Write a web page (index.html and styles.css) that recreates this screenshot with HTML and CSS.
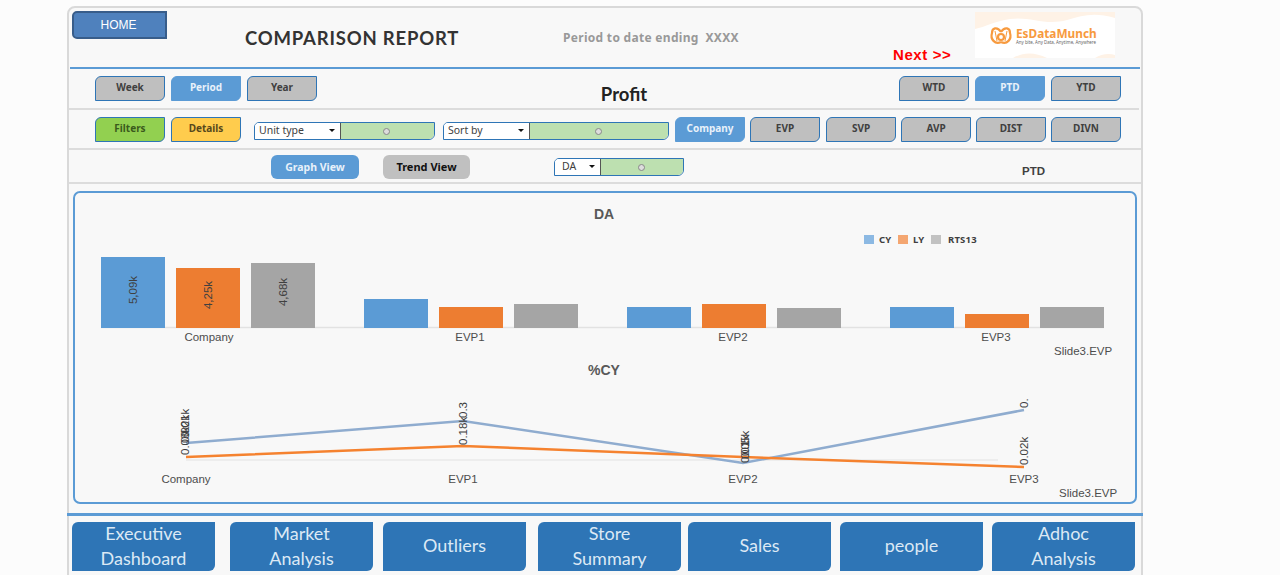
FILE: index.html
```html
<!DOCTYPE html>
<html lang="en">
<head>
<meta charset="utf-8">
<title>Comparison Report</title>
<link rel="stylesheet" href="styles.css">
</head>
<body>
<main class="panel">
  <header class="head">
    <a class="home">HOME</a>
    <h1 class="title">COMPARISON REPORT</h1>
    <p class="period">Period to date ending&nbsp; XXXX</p>
    <a class="next">Next &gt;&gt;</a>
    <svg class="logo" viewBox="0 0 140 46" role="img" aria-label="EsDataMunch logo">
      <rect width="140" height="46" fill="#fff"/>
      <path d="M0 0H140V6C120 0 108 3 92 8C70 14 55 4 35 7C20 9 10 15 0 17Z" fill="#fef2e6"/>
      <path d="M38 46C48 40 60 40 72 46Z" fill="#fef2e6"/>
      <path d="M120 46C126 42 134 41 140 43V46Z" fill="#fef2e6"/>
      <g fill="none" stroke="#f79a3e" stroke-width="2.200">
        <path d="M26 20C22 14 17 16 17 21C15 27 20 33 26 30"/>
        <path d="M26 20C30 14 35 16 35 21C37 27 32 33 26 30"/>
        <path d="M20 19L22 29M32 19L30 29" stroke-width="1"/>
        <circle cx="26" cy="25" r="3"/>
      </g>
      <text x="41" y="26" class="logo-name">EsDataMunch</text>
      <text x="41" y="31.500" class="logo-tag">Any bite, Any Data, Anytime, Anywhere</text>
    </svg>
  </header>

  <section class="row row-a">
    <div class="group">
      <button class="btn">Week</button>
      <button class="btn on">Period</button>
      <button class="btn wide-gap">Year</button>
    </div>
    <h2 class="metric">Profit</h2>
    <div class="group">
      <button class="btn">WTD</button>
      <button class="btn on">PTD</button>
      <button class="btn">YTD</button>
    </div>
  </section>

  <section class="row row-b">
    <button class="btn green">Filters</button>
    <button class="btn amber">Details</button>
    <div class="slicer s1"><span class="pick">Unit type<i class="caret"></i></span><span class="track"><i class="knob"></i></span></div>
    <div class="slicer s2"><span class="pick">Sort by<i class="caret"></i></span><span class="track"><i class="knob"></i></span></div>
    <button class="btn on">Company</button>
    <button class="btn tight">EVP</button>
    <button class="btn">SVP</button>
    <button class="btn tight">AVP</button>
    <button class="btn tight">DIST</button>
    <button class="btn tight">DIVN</button>
  </section>

  <section class="row row-c">
    <button class="view view-on">Graph View</button>
    <button class="view view-off">Trend View</button>
    <div class="slicer s3"><span class="pick">DA<i class="caret"></i></span><span class="track"><i class="knob"></i></span></div>
    <span class="ptd">PTD</span>
  </section>

  <section class="charts">
    <svg class="plot" viewBox="75 193 1060 309" role="img" aria-label="DA and percent CY charts">
      <text x="604" y="219" class="chart-title">DA</text>
      <rect x="864" y="235" width="10" height="9" class="lg-cy"/>
      <text x="879" y="243" class="legend">CY</text>
      <rect x="898" y="235" width="10" height="9" class="lg-ly"/>
      <text x="913" y="243" class="legend">LY</text>
      <rect x="931" y="235" width="10" height="9" class="lg-rt"/>
      <text x="948" y="243" class="legend">RTS13</text>

      <line x1="101" y1="327.500" x2="1104" y2="327.500" class="axis"/>
      <rect x="101" y="257" width="64" height="71" class="cy"/>
      <rect x="176" y="268" width="64" height="60" class="ly"/>
      <rect x="251" y="263" width="64" height="65" class="rt"/>
      <rect x="364" y="299" width="64" height="29" class="cy"/>
      <rect x="439" y="307" width="64" height="21" class="ly"/>
      <rect x="514" y="304" width="64" height="24" class="rt"/>
      <rect x="627" y="307" width="64" height="21" class="cy"/>
      <rect x="702" y="304" width="64" height="24" class="ly"/>
      <rect x="777" y="308" width="64" height="20" class="rt"/>
      <rect x="890" y="307" width="64" height="21" class="cy"/>
      <rect x="965" y="314" width="64" height="14" class="ly"/>
      <rect x="1040" y="307" width="64" height="21" class="rt"/>

      <text transform="translate(137 290) rotate(-90)" class="val mid">5,09k</text>
      <text transform="translate(212 295) rotate(-90)" class="val mid">4,25k</text>
      <text transform="translate(287 292) rotate(-90)" class="val mid">4,68k</text>

      <text x="209" y="341" class="cat">Company</text>
      <text x="470" y="341" class="cat">EVP1</text>
      <text x="733" y="341" class="cat">EVP2</text>
      <text x="996" y="341" class="cat">EVP3</text>
      <text x="1054" y="355" class="note">Slide3.EVP</text>

      <text x="604" y="375" class="chart-title">%CY</text>
      <line x1="186" y1="460" x2="998" y2="460" class="axis thin"/>
      <polyline points="186,443 463,421 743,463 1024,410" class="line-cy"/>
      <polyline points="186,457 463,446 743,457 1024,467" class="line-ly"/>

      <text transform="translate(189 455) rotate(-90)" class="val">0.03k</text>
      <text transform="translate(189 443) rotate(-90)" class="val">0.02k</text>
      <text transform="translate(189 437) rotate(-90)" class="val">0.01k</text>
      <text transform="translate(467 445) rotate(-90)" class="val">0.18k</text>
      <text transform="translate(467 418) rotate(-90)" class="val">0.3</text>
      <text transform="translate(749 463) rotate(-90)" class="val">0.01k</text>
      <text transform="translate(749 459) rotate(-90)" class="val">0.05k</text>
      <text transform="translate(749 456) rotate(-90)" class="val">0.1</text>
      <text transform="translate(1028 408) rotate(-90)" class="val">0.</text>
      <text transform="translate(1028 465) rotate(-90)" class="val">0.02k</text>

      <text x="186" y="483" class="cat">Company</text>
      <text x="463" y="483" class="cat">EVP1</text>
      <text x="743" y="483" class="cat">EVP2</text>
      <text x="1024" y="483" class="cat">EVP3</text>
      <text x="1059" y="497" class="note">Slide3.EVP</text>
    </svg>
  </section>

  <nav class="nav">
    <a class="tile">Executive Dashboard</a>
    <a class="tile">Market Analysis</a>
    <a class="tile">Outliers</a>
    <a class="tile">Store Summary</a>
    <a class="tile">Sales</a>
    <a class="tile">people</a>
    <a class="tile">Adhoc Analysis</a>
  </nav>
</main>
</body>
</html>
```
FILE: styles.css
```css
* { box-sizing: border-box; }
html, body { margin: 0; height: 575px; overflow: hidden; }
body { background: #fcfcfc; padding: 6px 0 0 67px; font-family: "Noto Sans", sans-serif; }
a { display: block; }
h1, h2, p { margin: 0; font-weight: inherit; }

.panel {
  width: 1076px;
  height: 580px;
  background: #f8f8f8;
  border: 2px solid #d9d9d9;
  border-radius: 8px;
}

/* header */
.head {
  position: relative;
  display: flex;
  align-items: flex-start;
  height: 61px;
  margin: 0 1px 0 1px;
  border-bottom: 2px solid #5b9bd5;
}
.home {
  width: 95px;
  height: 28px;
  margin: 3px 0 0 2px;
  background: #4f81bd;
  border: 2px solid #385d8a;
  border-radius: 5px 0 0 5px;
  color: #fff;
  font: 12px/25px "Liberation Sans", sans-serif;
  text-indent: -2px;
  text-align: center;
}
.title {
  margin: 18px 0 0 78px;
  width: 318px;
  color: #333;
  font: 700 18.500px/24px "Lato", sans-serif;
  letter-spacing: 0.8px;
}
.period {
  width: 330px;
  margin-top: 22px;
  color: #999;
  font: 700 12px/16px "Noto Sans", sans-serif;
  letter-spacing: 0.3px;
}
.next {
  width: 82px;
  margin-top: 38px;
  color: #f00;
  font: 700 15px/18px "Liberation Sans", sans-serif;
  letter-spacing: 0.6px;
}
.logo { width: 140px; height: 46px; margin-top: 4px; }
.logo-name { fill: #f79a3e; font: 700 11.800px "Noto Sans", sans-serif; }
.logo-tag { fill: #666; font: 4.400px "Noto Sans", sans-serif; }

/* filter rows */
.row { display: flex; align-items: center; border-bottom: 2px solid #dcdcdc; }
.row-a { height: 41px; padding: 0 0 0 26px; margin-right: 2px; }
.row-b { height: 40px; padding: 1px 0 0 26px; }
.row-c { height: 34px; padding: 2px 0 0 202px; }
.group { display: flex; gap: 6px; }
.wide-gap { margin-left: 1px; }
.metric {
  width: 582px;
  padding-left: 32px;
  text-align: center;
  color: #222;
  font: 700 18.500px/26px "Lato", sans-serif;
  margin-top: 10px;
}
.btn {
  width: 70px;
  height: 25px;
  padding: 0 0 4px;
  margin: 0;
  background: #bfbfbf;
  border: 1.500px solid #2e75b6;
  border-radius: 6px 0 6px 0;
  color: #404040;
  font: 700 10px/18px "Noto Sans", sans-serif;
}
.btn.on { background: #5b9bd5; border-color: #5b9bd5; color: #e8f1fa; }
.btn.green { background: #92d050; color: #3a5a1c; }
.btn.amber { background: #ffcc4d; color: #57481c; }
.row-b .btn + .btn { margin-left: 6px; }
.row-b .btn.on { margin-left: 6px; }
.row-b .btn.tight { margin-left: 5px; }

/* slicers */
.slicer {
  display: flex;
  height: 18px;
  border: 1.500px solid #2e75b6;
  border-radius: 5px 0 6px 0;
  overflow: hidden;
  color: #404040;
  font: 10.500px/15px "Noto Sans", sans-serif;
}
.s1 { width: 181px; margin: 3px 0 0 13px; }
.s2 { width: 226px; margin: 3px 0 0 8px; }
.s3 { width: 130px; margin-left: 84px; }
.pick {
  position: relative;
  flex: none;
  padding-left: 4px;
  background: #fff;
  border-right: 1px solid #555;
}
.s1 .pick, .s2 .pick { width: 86px; }
.s3 .pick { width: 46px; padding-left: 7px; }
.track {
  flex: 1;
  display: flex;
  align-items: center;
  justify-content: center;
  background: #bde0b0;
}
.knob {
  width: 7px;
  height: 7px;
  margin-left: -2px;
  background: #ddd;
  border: 1.500px solid #888;
  border-radius: 50%;
}
.caret {
  position: absolute;
  right: 5px;
  top: 6px;
  border: 3px solid transparent;
  border-top: 3px solid #111;
  border-bottom: 0;
}
.view {
  height: 24px;
  padding: 0 0 1px;
  border: 0;
  border-radius: 6px;
  font: 700 10.500px/22px "Noto Sans", sans-serif;
}
.view-on { width: 88px; background: #5b9bd5; color: #e8f1fa; }
.view-off { width: 87px; background: #c0c0c0; color: #111; margin-left: 24px; font-size: 11px; }
.ptd {
  margin: 8px 0 0 338px;
  color: #404040;
  font: 700 11.500px "Liberation Sans", sans-serif;
}

/* charts */
.charts {
  width: 1064px;
  height: 313px;
  margin: 7px 0 0 4px;
  border: 2px solid #5b9bd5;
  border-radius: 7px;
}
.plot { display: block; width: 1060px; height: 309px; }
.chart-title { fill: #595959; font: 700 14px "Liberation Sans", sans-serif; text-anchor: middle; }
.legend { fill: #404040; font: 700 9.500px "Noto Sans", sans-serif; letter-spacing: 0.2px; }
.cat { fill: #4d4d4d; font: 11.500px "Liberation Sans", sans-serif; text-anchor: middle; }
.note { fill: #4d4d4d; font: 11.500px "Liberation Sans", sans-serif; }
.val { fill: #404040; font: 11.500px "Liberation Sans", sans-serif; }
.val.mid { text-anchor: middle; }
.cy { fill: #5b9bd5; }
.ly { fill: #ed7d31; }
.rt { fill: #a5a5a5; }
.lg-cy { fill: #8cb9e3; }
.lg-ly { fill: #f4a671; }
.lg-rt { fill: #c2c2c2; }
.axis { stroke: #e2e2e2; stroke-width: 1.500; }
.axis.thin { stroke-width: 1; }
.line-cy { fill: none; stroke: #8faccf; stroke-width: 2.500; }
.line-ly { fill: none; stroke: #f5822f; stroke-width: 2.500; }

/* nav */
.nav {
  display: flex;
  height: 59px;
  margin: 9px -2px 0;
  padding: 6px 0 0 5px;
  border-top: 3px solid #5b9bd5;
}
.tile {
  display: flex;
  align-items: center;
  justify-content: center;
  width: 143px;
  height: 49px;
  padding: 0 26px 2px;
  background: #2e75b6;
  border-radius: 6px 0 6px 0;
  color: #dce9f5;
  font: 18px/25px "Lato", sans-serif;
  text-align: center;
}
.tile:nth-child(2) { margin-left: 15px; }
.tile:nth-child(3) { margin-left: 10px; }
.tile:nth-child(4) { margin-left: 12px; }
.tile:nth-child(5) { margin-left: 7px; }
.tile:nth-child(6) { margin-left: 9px; }
.tile:nth-child(7) { margin-left: 9px; }
```
